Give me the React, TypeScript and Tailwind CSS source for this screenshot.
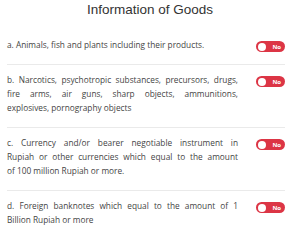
import React from "react";

const items: string[][] = [
  ["a. Animals, fish and plants including their products."],
  [
    "b. Narcotics, psychotropic substances, precursors, drugs,",
    "fire arms, air guns, sharp objects, ammunitions,",
    "explosives, pornography objects",
  ],
  [
    "c. Currency and/or bearer negotiable instrument in",
    "Rupiah or other currencies which equal to the amount",
    "of 100 million Rupiah or more.",
  ],
  [
    "d. Foreign banknotes which equal to the amount of 1",
    "Billion Rupiah or more",
  ],
];

function Toggle() {
  return (
    <div className="mt-[3px] flex h-[11px] w-[29px] shrink-0 items-center rounded-full bg-[#dc3545] pl-[1.5px] pr-[4px]">
      <div className="h-[8px] w-[8px] rounded-full bg-white" />
      <span
        className="ml-auto text-[6px] font-bold leading-none text-white"
        style={{ fontFamily: '"Open Sans", sans-serif' }}
      >
        No
      </span>
    </div>
  );
}

export default function App() {
  return (
    <div className="w-[300px] h-[231px] overflow-hidden bg-white">
      <h1
        className="pt-[1px] text-center text-[13.5px] leading-[18px] text-[#333]"
        style={{ fontFamily: '"Liberation Sans", Arial, sans-serif' }}
      >
        Information of Goods
      </h1>
      <div className="pl-[7px] pr-[15px] pt-[11px]" style={{ fontFamily: '"Open Sans", sans-serif' }}>
        {items.map((lines, i) => (
          <div
            key={i}
            className={`flex items-start justify-between pt-[8px] pb-[12px] ${i < items.length - 1 ? "border-b border-[#eaeaea]" : ""}`}
          >
            <p className="w-[231px] text-[8.3px] leading-[14px] text-[#444]">
              {lines.map((l, j) => (
                <span
                  key={j}
                  className={`block whitespace-nowrap ${j < lines.length - 1 ? "text-justify [text-align-last:justify]" : ""}`}
                >
                  {l}
                </span>
              ))}
            </p>
            <Toggle />
          </div>
        ))}
      </div>
    </div>
  );
}
